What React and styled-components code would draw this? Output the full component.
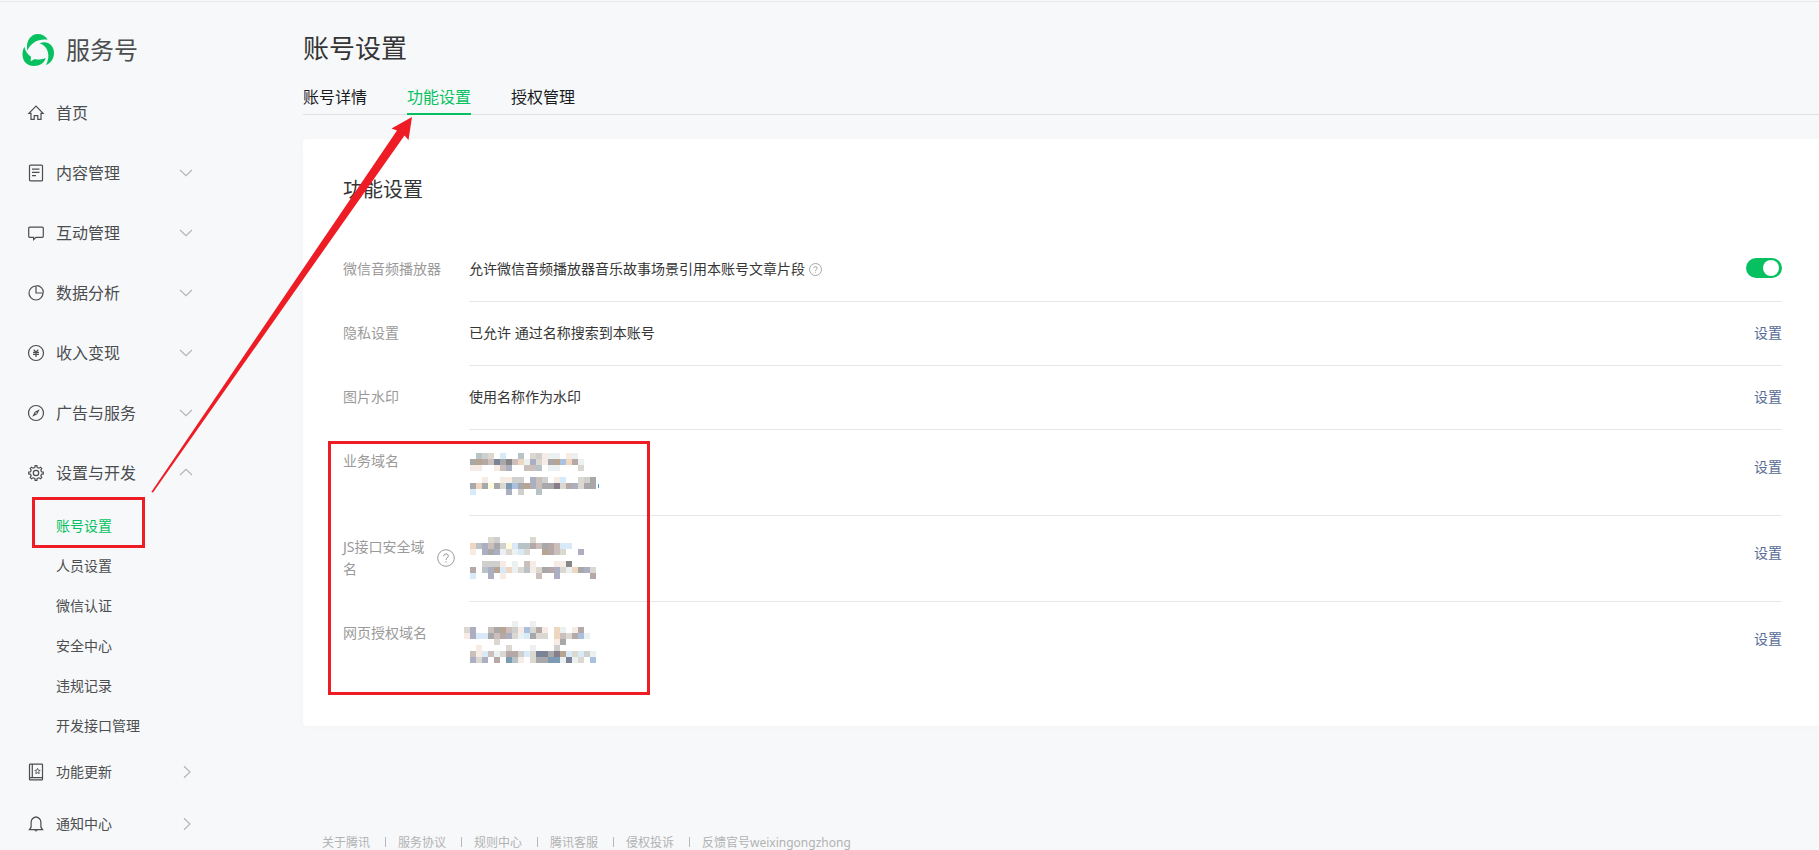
import React from "react";
import styled, { createGlobalStyle } from "styled-components";

const GlobalStyle = createGlobalStyle`
  *, *::before, *::after { box-sizing: border-box; }
  body {
    margin: 0;
    background: #f6f8fa;
    color: #353535;
    font: 14px/22px "Noto Sans", "Noto Sans CJK SC", sans-serif;
  }
  a { color: inherit; text-decoration: none; }
  button { font: inherit; color: inherit; border: 0; padding: 0; background: none; cursor: pointer; }
  h1, h2, ul, dl, dd, dt { margin: 0; padding: 0; font-weight: 400; }
  ul { list-style: none; }
  svg { display: block; flex: none; }
`;

const Page = styled.div`
  position: relative;
  display: flex;
  min-height: 100vh;
  overflow: hidden;
`;

const TopLine = styled.div`
  position: absolute;
  top: 1px;
  left: 0;
  right: 0;
  height: 1px;
  background: #e7e8ea;
`;

const Sidebar = styled.aside`
  flex: none;
  width: 227px;
  color: #4c4d4f;
`;

const Brand = styled.a`
  display: flex;
  align-items: center;
  gap: 12px;
  height: 83px;
  padding: 17px 0 0 22px;
  font-size: 24px;
  line-height: 32px;
`;

const MenuRow = styled.button`
  display: flex;
  align-items: center;
  width: 100%;
  height: ${(p) => (p.$small ? 52 : 60)}px;
  padding: 0 34px 0 28px;
  gap: 12px;
  font-size: ${(p) => (p.$small ? 14 : 16)}px;
  line-height: 24px;
  text-align: left;
`;

const MenuText = styled.span`
  flex: 1;
`;

const SubMenu = styled.ul`
  padding: 3px 0 0 56px;
`;

const SubLink = styled.a`
  display: flex;
  align-items: center;
  height: 40px;
  color: ${(p) => (p.$active ? "#07c160" : "inherit")};
`;

const Main = styled.main`
  flex: 1;
  display: flex;
  flex-direction: column;
  min-width: 0;
  padding: 30px 0 0 76px;
`;

const Title = styled.h1`
  font-size: 26px;
  line-height: 36px;
`;

const Tabs = styled.nav`
  display: flex;
  gap: 40px;
  margin: 18px 0 24px;
  box-shadow: inset 0 -1px #e0e1e3;
`;

const Tab = styled.a`
  height: 31px;
  font-size: 16px;
  line-height: 26px;
  color: ${(p) => (p.$active ? "#07c160" : "#1a1b1c")};
  border-bottom: 2px solid ${(p) => (p.$active ? "#07c160" : "transparent")};
`;

const Card = styled.section`
  padding: 37px 37px 38px 40px;
  background: #fff;
  border-radius: 4px 0 0 4px;
  box-shadow: 0 1px 8px rgba(0, 0, 0, 0.02);
`;

const CardTitle = styled.h2`
  margin-bottom: 34px;
  font-size: 20px;
  line-height: 28px;
`;

const Row = styled.div`
  display: flex;
  align-items: stretch;
`;

const Label = styled.div`
  display: flex;
  flex: none;
  align-items: center;
  align-self: flex-start;
  justify-content: space-between;
  width: 112px;
  margin: 20px 14px 0 0;
  color: #9a9a9a;
`;

const RowBody = styled.div`
  display: flex;
  flex: 1;
  justify-content: space-between;
  padding: 20px 0;
  min-height: ${(p) => (p.$tall ? 86 : 64)}px;
  border-bottom: 1px solid ${(p) => (p.$last ? "transparent" : "#e7e7eb")};
`;

const Value = styled.div`
  display: flex;
  align-items: flex-start;
`;

const ValueText = styled.span`
  margin-right: 4px;
`;

const HelpButton = styled.button`
  display: flex;
  align-items: center;
  height: 22px;
`;

const SetLink = styled.a`
  align-self: flex-start;
  padding-top: ${(p) => (p.$tall ? 6 : 0)}px;
  color: #576b95;
`;

const Switch = styled.input`
  appearance: none;
  display: flex;
  width: 36px;
  height: 20px;
  margin: 0;
  padding: 2px 3px;
  border-radius: 10px;
  background: #c9c9c9;
  cursor: pointer;

  &::before {
    content: "";
    width: 16px;
    height: 16px;
    border-radius: 50%;
    background: #fff;
  }

  &:checked {
    justify-content: flex-end;
    background: #07c160;
  }
`;

const Footer = styled.footer`
  display: flex;
  margin-top: auto;
  padding-left: 19px;
  font-size: 12px;
  line-height: 14px;
  color: #b2b2b2;
`;

const FooterItem = styled.a`
  & + &::before {
    content: "";
    display: inline-block;
    width: 1px;
    height: 10px;
    margin: 0 12px 0 15px;
    background: #b8b8bc;
  }
`;

const MarkBox = styled.div`
  position: absolute;
  border: 3px solid #ee1c25;
  pointer-events: none;
`;

const AccountMark = styled(MarkBox)`
  left: 32px;
  top: 497px;
  width: 113px;
  height: 51px;
`;

const DomainMark = styled(MarkBox)`
  left: 328px;
  top: 441px;
  width: 322px;
  height: 254px;
`;

const ArrowMark = styled.svg`
  position: absolute;
  left: 150px;
  top: 115px;
  pointer-events: none;
`;

const Logo = () => (
  <svg width="32" height="32" viewBox="0 0 96 96" fill="#07c160" aria-hidden="true">
    <path d="M16 50C10 20 28 0 46 0C60 0 71 6 77 17C52 13 27 24 16 50Z" />
    <path d="M53 28C75 18 96 34 96 56C96 72 88 87 72 93C86 68 80 38 53 28Z" />
    <path d="M7 38C-5 62 2 96 36 96C53 96 67 88 71 72C59 77 45 77 37 76L26 82L27 68C18 62 10 52 7 38Z" />
  </svg>
);

const iconShapes = {
  home: <path d="M8 1.2L.9 8.3H3V14.4H6.2V10.6H9.8V14.4H13V8.3H15.1Z" />,
  doc: (
    <>
      <rect x="1.5" y=".1" width="13" height="15.8" rx="1" />
      <path d="M4 4.2H11.5M4 7.4H11.5M4 10.7H8" />
    </>
  ),
  chat: <path d="M1.7 2.2H14.3Q15.3 2.2 15.3 3.2V11.3Q15.3 12.3 14.3 12.3H8L5.6 14.6V12.3H1.7Q.7 12.3.7 11.3V3.2Q.7 2.2 1.7 2.2Z" />,
  pie: (
    <>
      <path d="M8 1A7 7 0 1 0 15 8H8Z" />
      <path d="M8.6.6A6.9 6.9 0 0 1 15.4 7.4" />
    </>
  ),
  yen: (
    <>
      <circle cx="8" cy="8" r="7.5" />
      <path d="M5.7 4.6L8 7.2L10.3 4.6M5 7.4H11M5 9.4H11M8 7.2V12" />
    </>
  ),
  compass: (
    <>
      <circle cx="8" cy="8" r="7.5" />
      <path d="M11.8 4.2L9.2 9.2L6.8 6.8ZM4.2 11.8L6.8 6.8L9.2 9.2Z" fill="#4c4d4f" stroke="none" />
      <circle cx="8" cy="8" r=".8" fill="#fff" stroke="none" />
    </>
  ),
  gear: (
    <>
      <circle cx="8" cy="8" r="2.7" />
      <path d="M6.8 2.5L7.1.7H8.9L9.2 2.5L11 3.2L12.5 2.2L13.8 3.5L12.8 5L13.5 6.8L15.3 7.1V8.9L13.5 9.2L12.8 11L13.8 12.5L12.5 13.8L11 12.8L9.2 13.5L8.9 15.3H7.1L6.8 13.5L5 12.8L3.5 13.8L2.2 12.5L3.2 11L2.5 9.2L.7 8.9V7.1L2.5 6.8L3.2 5L2.2 3.5L3.5 2.2L5 3.2Z" />
    </>
  ),
  book: (
    <>
      <rect x="1.5" y=".1" width="13" height="15.8" rx=".6" />
      <path d="M4.3 0V13.7M1.5 13.7H14.5" />
      <path d="M9.5 4.4L10.3 6.2L12.1 6.4L10.8 7.7L11.2 9.6L9.5 8.7L7.8 9.6L8.2 7.7L6.9 6.4L8.7 6.2Z" strokeWidth=".9" />
    </>
  ),
  bell: (
    <>
      <path d="M1.4 13.7H14.6L12.9 11.2V6.4Q12.6 1.9 8 .9Q3.4 1.9 3.1 6.4V11.2Z" />
      <path d="M6.2 14.2H9.8L8 15.8Z" fill="#4c4d4f" stroke="none" />
    </>
  ),
};

const Icon = ({ name }) => (
  <svg width="16" height="16" viewBox="0 0 16 16" fill="none" stroke="#4c4d4f" strokeWidth="1.2" overflow="visible" aria-hidden="true">
    {iconShapes[name]}
  </svg>
);

const chevrons = {
  down: "M1 4L7 9.6L13 4",
  up: "M1 9L7 3.4L13 9",
  right: "M5 1.2L11 7L5 12.8",
};

const Chevron = ({ dir }) => (
  <svg width="14" height="14" viewBox="0 0 14 14" fill="none" stroke="#b4b5b8" strokeWidth="1.2" aria-hidden="true">
    <path d={chevrons[dir]} />
  </svg>
);

const HelpIcon = ({ size }) => (
  <svg width={size} height={size} viewBox="0 0 18 18" fill="none" stroke="#999" strokeWidth={size > 14 ? 1 : 1.2} aria-hidden="true">
    <circle cx="9" cy="9" r="8.3" />
    <path d="M6.6 7.2Q6.7 4.9 9 4.9Q11.3 5 11.4 7Q11.3 8.2 10 9Q9 9.7 9 11M9 12.2V13.4" />
  </svg>
);

const palette = {
  g: "#a8a8aa", l: "#cfcfcd", b: "#b5a8a6", t: "#b8a591", d: "#7b8496", s: "#a9c0de",
  p: "#d8e9f8", v: "#acaec2", o: "#eed6c1", w: "#f7ece5", c: "#dbd7d1", e: "#ebf0f0",
  y: "#fefbdf", k: "#867e8a", m: "#cbbfbb", n: "#7c9bb2", x: "#868688", q: "#b8c3c8",
};

/* Each string is one band of 6px cells; the first cell of a band is at x = -6. */
const mosaics = {
  business: {
    top: 3,
    bands: [
      "..qlc.p..q.clwee.we",
      ".gtbmdgxmoevcwgtsobe",
      ".ww..wmv..mmq.ee...c",
      "",
      "...w..wwll.vml.wp..clg",
      ".gogygcnsgtvmggkcbvcgg",
      ".p.....v.l..q",
    ],
    tick: true,
  },
  js: {
    top: 1,
    bands: [
      "....cl.....c",
      ".oqvmglypqqbmgbmpp",
      ".w.vgvecepc..tbmc..v",
      "",
      "...lllw.e.mw...wwx",
      ".b.qvtpoecqwcgbvceogvc",
      ".p..v.w.....m..v.....b",
    ],
  },
  oauth: {
    top: -1,
    bands: [
      "........e..e",
      "cv..mgtmlwscbw.oe.wb",
      "wvppgmbvcepgcc.omcbse",
      ".....c.........wg",
      "..w....c...e...l",
      ".mwpmecbblpcddgktpcple",
      ".vcv.b.nqw.cggnnedec.s",
    ],
  },
};

const MosaicSvg = styled.svg`
  height: 44px;
  overflow: visible;
`;

const Mosaic = ({ name }) => {
  const { top, bands, tick } = mosaics[name];
  return (
    <MosaicSvg width="136" viewBox="-1 0 136 44" shapeRendering="crispEdges" role="img" aria-label="域名">
      {bands.flatMap((band, r) =>
        [...band].map((cell, c) =>
          cell === "." ? null : (
            <rect key={`${r}-${c}`} x={(c - 1) * 6} y={top + r * 6} width="6" height="6" fill={palette[cell]} />
          )
        )
      )}
      {tick && <rect x="128" y="34" width="1" height="4" fill="#3f9be8" />}
    </MosaicSvg>
  );
};

const menu = [
  { icon: "home", text: "首页" },
  { icon: "doc", text: "内容管理", dir: "down" },
  { icon: "chat", text: "互动管理", dir: "down" },
  { icon: "pie", text: "数据分析", dir: "down" },
  { icon: "yen", text: "收入变现", dir: "down" },
  { icon: "compass", text: "广告与服务", dir: "down" },
  { icon: "gear", text: "设置与开发", dir: "up" },
];

const subMenu = ["账号设置", "人员设置", "微信认证", "安全中心", "违规记录", "开发接口管理"];

const moreMenu = [
  { icon: "book", text: "功能更新", dir: "right" },
  { icon: "bell", text: "通知中心", dir: "right" },
];

const tabs = ["账号详情", "功能设置", "授权管理"];

const settings = [
  { label: "微信音频播放器", text: "允许微信音频播放器音乐故事场景引用本账号文章片段", help: true, toggle: true },
  { label: "隐私设置", text: "已允许 通过名称搜索到本账号" },
  { label: "图片水印", text: "使用名称作为水印" },
  { label: "业务域名", mosaic: "business" },
  { label: "JS接口安全域名", mosaic: "js", labelHelp: true },
  { label: "网页授权域名", mosaic: "oauth" },
];

const footerLinks = ["关于腾讯", "服务协议", "规则中心", "腾讯客服", "侵权投诉", "反馈官号weixingongzhong"];

const MenuItem = ({ item, small }) => (
  <MenuRow type="button" $small={small}>
    <Icon name={item.icon} />
    <MenuText>{item.text}</MenuText>
    {item.dir && <Chevron dir={item.dir} />}
  </MenuRow>
);

const SettingRow = ({ item, last }) => {
  const tall = Boolean(item.mosaic);
  return (
    <Row>
      <Label>
        {item.toggle ? <label htmlFor="audio-switch">{item.label}</label> : <span>{item.label}</span>}
        {item.labelHelp && (
          <HelpButton type="button" aria-label="帮助">
            <HelpIcon size={18} />
          </HelpButton>
        )}
      </Label>
      <RowBody $tall={tall} $last={last}>
        <Value>
          {tall ? <Mosaic name={item.mosaic} /> : <ValueText>{item.text}</ValueText>}
          {item.help && (
            <HelpButton type="button" aria-label="帮助">
              <HelpIcon size={13} />
            </HelpButton>
          )}
        </Value>
        {item.toggle ? (
          <Switch id="audio-switch" type="checkbox" role="switch" defaultChecked />
        ) : (
          <SetLink href="#" $tall={tall}>设置</SetLink>
        )}
      </RowBody>
    </Row>
  );
};

export default function App() {
  return (
    <Page>
      <GlobalStyle />
      <TopLine />
      <Sidebar>
        <Brand href="#">
          <Logo />
          服务号
        </Brand>
        <nav>
          {menu.map((item) => (
            <MenuItem key={item.text} item={item} />
          ))}
          <SubMenu>
            {subMenu.map((text, i) => (
              <li key={text}>
                <SubLink href="#" $active={i === 0}>{text}</SubLink>
              </li>
            ))}
          </SubMenu>
          {moreMenu.map((item) => (
            <MenuItem key={item.text} item={item} small />
          ))}
        </nav>
      </Sidebar>
      <Main>
        <Title>账号设置</Title>
        <Tabs>
          {tabs.map((text, i) => (
            <Tab key={text} href="#" $active={i === 1}>{text}</Tab>
          ))}
        </Tabs>
        <Card>
          <CardTitle>功能设置</CardTitle>
          {settings.map((item, i) => (
            <SettingRow key={item.label} item={item} last={i === settings.length - 1} />
          ))}
        </Card>
        <Footer>
          {footerLinks.map((text) => (
            <FooterItem key={text} href="#">{text}</FooterItem>
          ))}
        </Footer>
      </Main>
      <AccountMark />
      <DomainMark />
      <ArrowMark width="264" height="380" viewBox="150 115 264 380" aria-hidden="true">
        <polygon points="151.3,492 397,130.5 391.5,128.5 412,117 408.5,140 404.5,135.5 153,492.5" fill="#ee1c25" />
      </ArrowMark>
    </Page>
  );
}
